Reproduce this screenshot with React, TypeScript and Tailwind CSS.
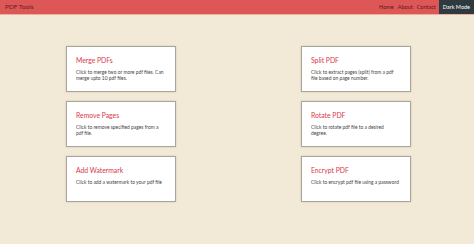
import React from "react";

const cards: [string, string[]][] = [
  ["Merge PDFs", ["Click to merge two or more pdf files. Can", "merge upto 10 pdf files."]],
  ["Split PDF", ["Click to extract pages (split) from a pdf", "file based on page number."]],
  ["Remove Pages", ["Click to remove specified pages from a", "pdf file."]],
  ["Rotate PDF", ["Click to rotate pdf file to a desired", "degree."]],
  ["Add Watermark", ["Click to add a watermark to your pdf file"]],
  ["Encrypt PDF", ["Click to encrypt pdf file using a password"]],
];

export default function App() {
  return (
    <div
      className="w-[474px] h-[244px] bg-[#f2e9d6] overflow-hidden"
      style={{ fontFamily: 'Lato, "Open Sans", sans-serif' }}
    >
      <nav className="h-[15px] bg-[#dc5755] flex items-center justify-between pl-[5px] border-b border-[#eab0a0]">
        <span className="text-[6.5px] text-[#6b1c1c]">PDF Tools</span>
        <div className="flex items-center h-full">
          <span className="text-[5.5px] text-[#5a1a1a] mr-[4px]">Home</span>
          <span className="text-[5.5px] text-[#5a1a1a] mr-[4px]">About</span>
          <span className="text-[5.5px] text-[#5a1a1a] mr-[3px]">Contact</span>
          <span className="h-full px-[4px] bg-[#2f3a40] text-white text-[5.5px] flex items-center">Dark Mode</span>
        </div>
      </nav>
      <div className="grid grid-cols-[110px_110px] justify-between gap-y-[9px] pl-[66px] pr-[63px] pt-[31px]">
        {cards.map(([t, lines]) => (
          <div
            key={t}
            className="h-[46px] bg-white border border-[#aaa59c] shadow-[0_0_2px_rgba(0,0,0,0.15)] px-[9px] pt-[9px]"
          >
            <div className="text-[6.8px] leading-[9px] text-[#d9374b]">{t}</div>
            <div className="text-[4.9px] leading-[6px] text-[#444] mt-[4px] whitespace-nowrap">
              {lines.map((l) => (
                <div key={l}>{l}</div>
              ))}
            </div>
          </div>
        ))}
      </div>
    </div>
  );
}
